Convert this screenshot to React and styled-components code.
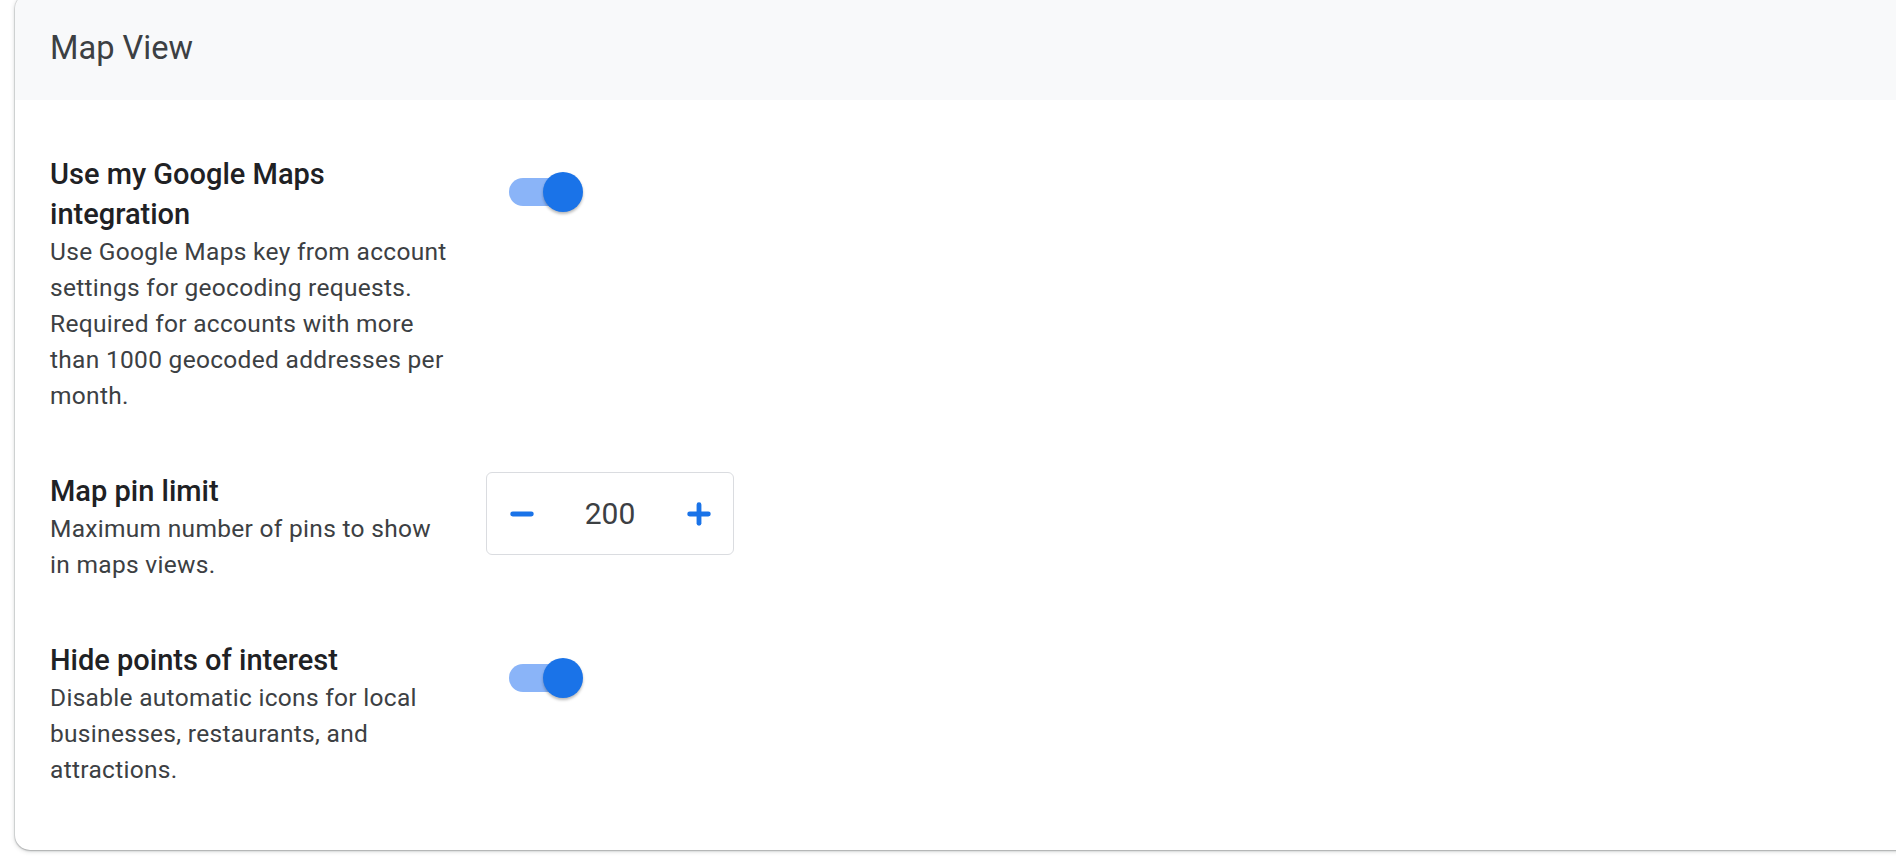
import React, { useState } from "react";
import styled, { createGlobalStyle } from "styled-components";

const GlobalStyle = createGlobalStyle`
  html, body {
    margin: 0;
    padding: 0;
    background: #ffffff;
    overflow: hidden;
  }
  body {
    font-family: Roboto, "Noto Sans", Arial, sans-serif;
  }
`;

const Page = styled.div`
  padding: 0 0 0 15px;
  width: 100vw;
  height: 100vh;
  box-sizing: border-box;
  overflow: hidden;
`;

// the card runs past the right edge of the window, its top sits a little above it
const Card = styled.section`
  width: 1960px;
  margin-top: -6px;
  box-sizing: border-box;
  border-radius: 15px;
  overflow: hidden;
  background: #ffffff;
  box-shadow: 0 0 0 1px rgba(60, 64, 67, 0.1), 0 1px 2px rgba(60, 64, 67, 0.3),
    0 1px 4px 1px rgba(60, 64, 67, 0.14);
`;

const Header = styled.header`
  height: 106px;
  box-sizing: border-box;
  padding: 34px 35px 0;
  background: #f8f9fa;
`;

const HeaderTitle = styled.h2`
  margin: 0;
  font-size: 32.6px;
  line-height: 40px;
  font-weight: 400;
  color: #3c4043;
`;

const Body = styled.div`
  display: flex;
  flex-direction: column;
  gap: 57px;
  padding: 54px 35px 62px;
`;

const Row = styled.div`
  display: grid;
  grid-template-columns: 402px auto;
  column-gap: 34px;
  align-items: start;
`;

const Info = styled.div`
  display: flex;
  flex-direction: column;
`;

const Label = styled.div`
  font-size: 29px;
  line-height: 40px;
  font-weight: 500;
  color: #202124;
`;

const Description = styled.div`
  font-size: 24.5px;
  line-height: 36px;
  letter-spacing: 0.3px;
  color: #3c4043;
`;

const SwitchRoot = styled.button`
  position: relative;
  width: 100px;
  height: 48px;
  margin-top: 14px;
  padding: 0;
  border: 0;
  background: none;
  cursor: pointer;
`;

const Track = styled.span`
  position: absolute;
  left: 23px;
  top: 10px;
  width: 70px;
  height: 28px;
  border-radius: 14px;
  background: ${(p) => (p.$on ? "#8ab4f8" : "#bdc1c6")};
`;

const Thumb = styled.span`
  position: absolute;
  top: 4px;
  left: ${(p) => (p.$on ? "57px" : "19px")};
  width: 40px;
  height: 40px;
  border-radius: 50%;
  background: ${(p) => (p.$on ? "#1a73e8" : "#ffffff")};
  box-shadow: 0 2px 3px rgba(0, 0, 0, 0.28);
  transition: left 0.15s ease;
`;

const Stepper = styled.div`
  width: 248px;
  height: 83px;
  margin-top: 1px;
  box-sizing: border-box;
  border: 1.5px solid #dadce0;
  border-radius: 6px;
  display: flex;
  align-items: center;
  justify-content: space-between;
  padding: 0 14.5px;
`;

const StepButton = styled.button`
  width: 40px;
  height: 40px;
  padding: 0;
  border: 0;
  background: none;
  display: flex;
  align-items: center;
  justify-content: center;
  cursor: pointer;
  color: #1a73e8;
`;

const StepValue = styled.span`
  font-size: 30px;
  color: #3c4043;
`;

const MinusIcon = () => (
  <svg width="40" height="40" viewBox="0 0 24 24">
    <line x1="6.4" y1="12" x2="17.6" y2="12" stroke="currentColor" strokeWidth="2.9" strokeLinecap="round" />
  </svg>
);

const PlusIcon = () => (
  <svg width="40" height="40" viewBox="0 0 24 24">
    <line x1="6.4" y1="12" x2="17.6" y2="12" stroke="currentColor" strokeWidth="2.9" strokeLinecap="round" />
    <line x1="12" y1="6.4" x2="12" y2="17.6" stroke="currentColor" strokeWidth="2.9" strokeLinecap="round" />
  </svg>
);

const Switch = ({ on, onChange }) => {
  return (
    <SwitchRoot role="switch" aria-checked={on} onClick={() => onChange(!on)}>
      <Track $on={on} />
      <Thumb $on={on} />
    </SwitchRoot>
  );
};

const App = () => {
  const [useGoogle, setUseGoogle] = useState(true);
  const [hidePoi, setHidePoi] = useState(true);
  const [pinLimit, setPinLimit] = useState(200);

  return (
    <>
      <GlobalStyle />
      <Page>
        <Card>
          <Header>
            <HeaderTitle>Map View</HeaderTitle>
          </Header>
          <Body>
            <Row>
              <Info>
                <Label>Use my Google Maps integration</Label>
                <Description>
                  Use Google Maps key from account settings for geocoding
                  requests. Required for accounts with more than 1000 geocoded
                  addresses per month.
                </Description>
              </Info>
              <Switch on={useGoogle} onChange={setUseGoogle} />
            </Row>
            <Row>
              <Info>
                <Label>Map pin limit</Label>
                <Description>
                  Maximum number of pins to show in maps views.
                </Description>
              </Info>
              <Stepper>
                <StepButton onClick={() => setPinLimit(pinLimit - 1)}>
                  <MinusIcon />
                </StepButton>
                <StepValue>{pinLimit}</StepValue>
                <StepButton onClick={() => setPinLimit(pinLimit + 1)}>
                  <PlusIcon />
                </StepButton>
              </Stepper>
            </Row>
            <Row>
              <Info>
                <Label>Hide points of interest</Label>
                <Description>
                  Disable automatic icons for local businesses, restaurants,
                  and attractions.
                </Description>
              </Info>
              <Switch on={hidePoi} onChange={setHidePoi} />
            </Row>
          </Body>
        </Card>
      </Page>
    </>
  );
};

export default App;
